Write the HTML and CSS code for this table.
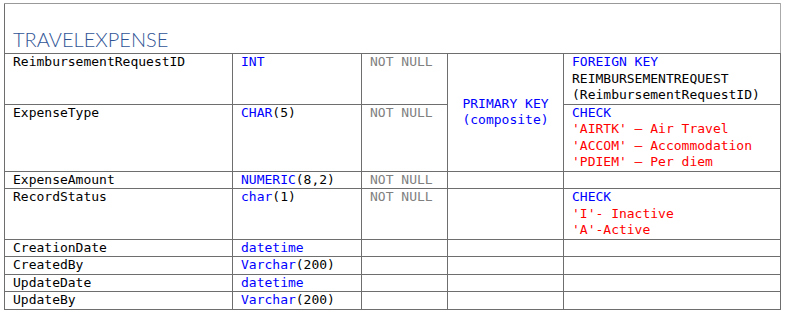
FILE: index.html
```html
<!DOCTYPE html>
<html>
<head>
<meta charset="utf-8">
<link rel="stylesheet" href="styles.css">
</head>
<body>
<table class="tbl">
  <colgroup>
    <col class="c1"><col class="c2"><col class="c3"><col class="c4"><col class="c5">
  </colgroup>
  <tr class="title-row">
    <td colspan="5" class="title">TRAVELEXPENSE</td>
  </tr>
  <tr>
    <td>ReimbursementRequestID</td>
    <td class="type">INT</td>
    <td class="nn">NOT NULL</td>
    <td rowspan="2" class="pk">PRIMARY KEY<br>(composite)</td>
    <td><span class="kw">FOREIGN KEY</span><br>REIMBURSEMENTREQUEST<br>(ReimbursementRequestID)</td>
  </tr>
  <tr>
    <td>ExpenseType</td>
    <td class="type">CHAR<span class="blk">(5)</span></td>
    <td class="nn">NOT NULL</td>
    <td><span class="kw">CHECK</span><br><span class="red">'AIRTK' – Air Travel<br>'ACCOM' – Accommodation<br>'PDIEM' – Per diem</span></td>
  </tr>
  <tr>
    <td>ExpenseAmount</td>
    <td class="type">NUMERIC<span class="blk">(8,2)</span></td>
    <td class="nn">NOT NULL</td>
    <td></td>
    <td></td>
  </tr>
  <tr>
    <td>RecordStatus</td>
    <td class="type">char<span class="blk">(1)</span></td>
    <td class="nn">NOT NULL</td>
    <td></td>
    <td><span class="kw">CHECK</span><br><span class="red">'I'- Inactive<br>'A'-Active</span></td>
  </tr>
  <tr>
    <td>CreationDate</td>
    <td class="type">datetime</td>
    <td></td><td></td><td></td>
  </tr>
  <tr>
    <td>CreatedBy</td>
    <td class="type">Varchar<span class="blk">(200)</span></td>
    <td></td><td></td><td></td>
  </tr>
  <tr>
    <td>UpdateDate</td>
    <td class="type">datetime</td>
    <td></td><td></td><td></td>
  </tr>
  <tr>
    <td>UpdateBy</td>
    <td class="type">Varchar<span class="blk">(200)</span></td>
    <td></td><td></td><td></td>
  </tr>
</table>
</body>
</html>
```
FILE: styles.css
```css
html, body {
  background: #ffffff;
}
body {
  margin: 3px 0 0 4px;
  font-family: "DejaVu Sans Mono", "Liberation Mono", monospace;
  font-size: 13px;
  color: #000;
}
.tbl {
  border-collapse: collapse;
  table-layout: fixed;
  width: 776px;
}
.c1 { width: 228px; }
.c2 { width: 129px; }
.c3 { width: 86px; }
.c4 { width: 116px; }
.c5 { width: 217px; }
.tbl td {
  border: 1px solid #6e6e6e;
  padding: 0 0 0 8px;
  line-height: 16.5px;
  vertical-align: top;
  white-space: nowrap;
  overflow: hidden;
}
.title-row td.title {
  height: 47px;
  vertical-align: bottom;
  font-family: "Lato", "Open Sans", sans-serif;
  font-size: 20px;
  font-weight: 300;
  color: #2f5496;
  line-height: 24px;
  padding-bottom: 2px;
  border-top-color: #999;
  border-right-color: #aaa;
}
.type { color: #0000ff; }
.blk { color: #000; }
.nn { color: #808080; }
.kw { color: #0000ff; }
.red { color: #ff0000; }
.tbl td.pk {
  color: #0000ff;
  text-align: center;
  vertical-align: middle;
  padding: 0;
}
```
